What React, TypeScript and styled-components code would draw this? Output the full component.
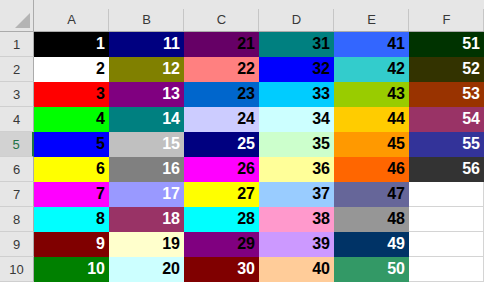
import React from "react";
import styled, { createGlobalStyle, css } from "styled-components";

const GlobalStyle = createGlobalStyle`
  html, body {
    margin: 0;
    padding: 0;
    background: #ffffff;
  }
  * {
    box-sizing: border-box;
  }
`;

const palette = [
  "#000000", "#FFFFFF", "#FF0000", "#00FF00", "#0000FF", "#FFFF00", "#FF00FF", "#00FFFF",
  "#800000", "#008000", "#000080", "#808000", "#800080", "#008080", "#C0C0C0", "#808080",
  "#9999FF", "#993366", "#FFFFCC", "#CCFFFF", "#660066", "#FF8080", "#0066CC", "#CCCCFF",
  "#000080", "#FF00FF", "#FFFF00", "#00FFFF", "#800080", "#800000", "#008080", "#0000FF",
  "#00CCFF", "#CCFFFF", "#CCFFCC", "#FFFF99", "#99CCFF", "#FF99CC", "#CC99FF", "#FFCC99",
  "#3366FF", "#33CCCC", "#99CC00", "#FFCC00", "#FF9900", "#FF6600", "#666699", "#969696",
  "#003366", "#339966", "#003300", "#333300", "#993300", "#993366", "#333399", "#333333",
];

const whiteText = new Set([1, 9, 10, 11, 12, 13, 14, 15, 16, 17, 18, 25, 30, 49, 50, 51, 52, 53, 54, 55, 56]);

const columns = ["A", "B", "C", "D", "E", "F"];

const Sheet = styled.div`
  display: grid;
  grid-template-columns: 34px repeat(6, 75px);
  grid-template-rows: 32px repeat(10, 25px);
  width: 484px;
  height: 283px;
  overflow: hidden;
  background: #ffffff;
  font-family: "Liberation Sans", Arial, sans-serif;
`;

const Corner = styled.div`
  position: relative;
  background: #e6e6e6;
  border-bottom: 1px solid #ababab;
  border-right: 1px solid #ababab;

  &::after {
    content: "";
    position: absolute;
    left: 15px;
    top: 13px;
    width: 0;
    height: 0;
    border-left: 15px solid transparent;
    border-bottom: 15px solid #b4b4b4;
  }
`;

const ColHeader = styled.div`
  position: relative;
  display: flex;
  align-items: center;
  justify-content: center;
  padding-top: 8px;
  background: #e6e6e6;
  border-bottom: 1px solid #ababab;
  color: #383838;
  font-size: 13px;

  &::after {
    content: "";
    position: absolute;
    right: 0;
    top: 9px;
    bottom: 0;
    width: 1px;
    background: #c6c6c6;
  }
`;

const RowHeader = styled.div<{ $active?: boolean }>`
  display: flex;
  align-items: center;
  justify-content: center;
  padding-top: 1px;
  background: #e6e6e6;
  border-bottom: 1px solid #cfcfcf;
  border-right: 1px solid #ababab;
  color: #383838;
  font-size: 13px;

  ${({ $active }) =>
    $active &&
    css`
      background: #d2d2d2;
      color: #217346;
      border-right: 2px solid #217346;
    `}
`;

const Cell = styled.div<{ $bg?: string; $fg?: string }>`
  display: flex;
  align-items: center;
  justify-content: flex-end;
  padding: 0 4px 2px 0;
  font-size: 16px;
  font-weight: bold;
  background: ${({ $bg }) => $bg ?? "#ffffff"};
  color: ${({ $fg }) => $fg ?? "#000000"};

  ${({ $bg }) =>
    !$bg &&
    css`
      border-right: 1px solid #d4d4d4;
      border-bottom: 1px solid #d4d4d4;
    `}
`;

const App = () => {
  const rows = Array.from({ length: 10 }, (_, r) => r);

  return (
    <>
      <GlobalStyle />
      <Sheet>
        <Corner />
        {columns.map((c) => (
          <ColHeader key={c}>{c}</ColHeader>
        ))}
        {rows.map((r) => (
          <React.Fragment key={r}>
            <RowHeader $active={r === 4}>{r + 1}</RowHeader>
            {columns.map((_, c) => {
              const n = c * 10 + r + 1;
              if (n > 56) return <Cell key={c} />;
              return (
                <Cell key={c} $bg={palette[n - 1]} $fg={whiteText.has(n) ? "#ffffff" : "#000000"}>
                  {n}
                </Cell>
              );
            })}
          </React.Fragment>
        ))}
      </Sheet>
    </>
  );
};

export default App;
